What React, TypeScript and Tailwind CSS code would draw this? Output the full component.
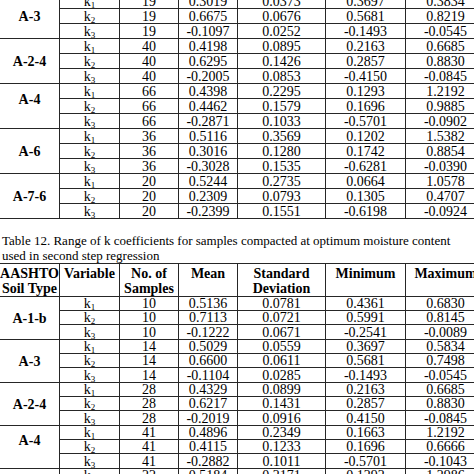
type Stat = [string, string, string, string];

interface Group {
  soil: string;
  n: string;
  rows: Stat[];
  // label sits between k1 and k2 rather than centred
  high?: boolean;
}

const upper: Group[] = [
  {
    soil: "A-3",
    n: "19",
    rows: [
      ["0.3019", "0.0373", "0.3697", "0.3834"],
      ["0.6675", "0.0676", "0.5681", "0.8219"],
      ["-0.1097", "0.0252", "-0.1493", "-0.0545"],
    ],
  },
  {
    soil: "A-2-4",
    n: "40",
    rows: [
      ["0.4198", "0.0895", "0.2163", "0.6685"],
      ["0.6295", "0.1426", "0.2857", "0.8830"],
      ["-0.2005", "0.0853", "-0.4150", "-0.0845"],
    ],
  },
  {
    soil: "A-4",
    n: "66",
    high: true,
    rows: [
      ["0.4398", "0.2295", "0.1293", "1.2192"],
      ["0.4462", "0.1579", "0.1696", "0.9885"],
      ["-0.2871", "0.1033", "-0.5701", "-0.0902"],
    ],
  },
  {
    soil: "A-6",
    n: "36",
    rows: [
      ["0.5116", "0.3569", "0.1202", "1.5382"],
      ["0.3016", "0.1280", "0.1742", "0.8854"],
      ["-0.3028", "0.1535", "-0.6281", "-0.0390"],
    ],
  },
  {
    soil: "A-7-6",
    n: "20",
    rows: [
      ["0.5244", "0.2735", "0.0664", "1.0578"],
      ["0.2309", "0.0793", "0.1305", "0.4707"],
      ["-0.2399", "0.1551", "-0.6198", "-0.0924"],
    ],
  },
];

const lower: Group[] = [
  {
    soil: "A-1-b",
    n: "10",
    rows: [
      ["0.5136", "0.0781", "0.4361", "0.6830"],
      ["0.7113", "0.0721", "0.5991", "0.8145"],
      ["-0.1222", "0.0671", "-0.2541", "-0.0089"],
    ],
  },
  {
    soil: "A-3",
    n: "14",
    rows: [
      ["0.5029", "0.0559", "0.3697", "0.5834"],
      ["0.6600", "0.0611", "0.5681", "0.7498"],
      ["-0.1104", "0.0285", "-0.1493", "-0.0545"],
    ],
  },
  {
    soil: "A-2-4",
    n: "28",
    rows: [
      ["0.4329", "0.0899", "0.2163", "0.6685"],
      ["0.6217", "0.1431", "0.2857", "0.8830"],
      ["-0.2019", "0.0916", "0.4150", "-0.0845"],
    ],
  },
  {
    soil: "A-4",
    n: "41",
    high: true,
    rows: [
      ["0.4896", "0.2349", "0.1663", "1.2192"],
      ["0.4115", "0.1233", "0.1696", "0.6666"],
      ["-0.2882", "0.1011", "-0.5701", "-0.1043"],
    ],
  },
  {
    soil: "A-6",
    n: "22",
    rows: [
      ["0.5184", "0.2171", "0.1292", "1.2986"],
      ["0.4077", "0.1266", "0.2086", "0.9031"],
      ["-0.3017", "0.1528", "-0.6281", "-0.0390"],
    ],
  },
];

const cell = "border border-[#262626] p-0 text-center align-middle";

function Cols() {
  return (
    <colgroup>
      <col className="w-[60px]" />
      <col className="w-[60px]" />
      <col className="w-[59px]" />
      <col className="w-[59px]" />
      <col className="w-[88px]" />
      <col className="w-[80px]" />
      <col className="w-[80px]" />
    </colgroup>
  );
}

function Body({ groups, rowH }: { groups: Group[]; rowH: string[] }) {
  return (
    <tbody>
      {groups.map((g) =>
        g.rows.map((r, i) => (
          <tr key={g.soil + i} className={rowH[i]}>
            {i === 0 && (
              <td rowSpan={3} className={`${cell} font-bold ${g.high ? "pb-[14px]" : ""}`}>
                {g.soil}
              </td>
            )}
            <td className={cell}>
              k<sub className="text-[9px]">{i + 1}</sub>
            </td>
            <td className={cell}>{g.n}</td>
            {r.map((v, j) => (
              <td key={j} className={cell}>
                {v}
              </td>
            ))}
          </tr>
        )),
      )}
    </tbody>
  );
}

export default function App() {
  return (
    <div className="h-[474px] w-[474px] overflow-hidden bg-white font-['Liberation_Serif','Times_New_Roman',serif] text-[14px] leading-[13px] text-black">
      <table className="-mt-[7px] -ml-px w-[486px] table-fixed border-collapse">
        <Cols />
        <Body groups={upper} rowH={["h-[15px]", "h-[15px]", "h-[15px]"]} />
      </table>

      <p className="mt-[14px] pl-[2px] text-[13px] leading-[15px] whitespace-nowrap">
        Table 12. Range of k coefficients for samples compacted at optimum moisture content
        <br />
        used in second step regression
      </p>

      <table className="-ml-px w-[486px] table-fixed border-collapse">
        <Cols />
        <thead>
          <tr className="h-[33px]">
            {["AASHTO Soil Type", "Variable", "No. of Samples", "Mean", "Standard Deviation", "Minimum", "Maximum"].map(
              (h) => (
                <th key={h} className={`${cell} !align-top pt-[2px] font-bold leading-[15px] whitespace-nowrap`}>
                  {h === "AASHTO Soil Type" ? (
                    <>
                      AASHTO
                      <br />
                      Soil Type
                    </>
                  ) : h === "No. of Samples" ? (
                    <>
                      No. of
                      <br />
                      Samples
                    </>
                  ) : h === "Standard Deviation" ? (
                    <>
                      Standard
                      <br />
                      Deviation
                    </>
                  ) : (
                    h
                  )}
                </th>
              ),
            )}
          </tr>
        </thead>
        <Body groups={lower} rowH={["h-[14px]", "h-[14px]", "h-[15px]"]} />
      </table>
    </div>
  );
}
